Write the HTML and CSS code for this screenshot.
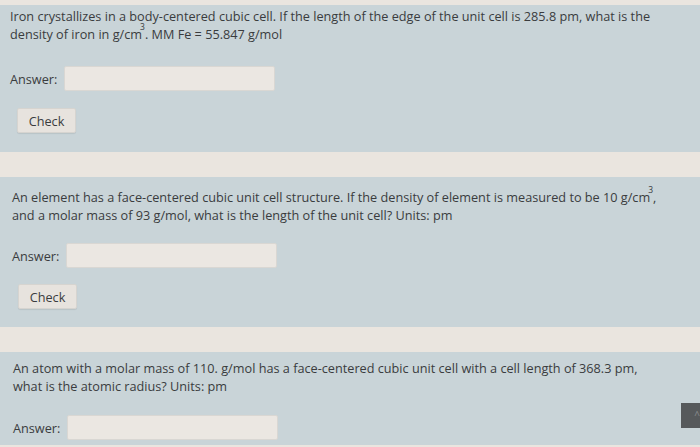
FILE: index.html
```html
<!DOCTYPE html>
<html lang="en">
<head>
<meta charset="utf-8">
<title>Quiz</title>
<link rel="stylesheet" href="styles.css">
</head>
<body>
<div class="page">
  <section class="question q1">
    <p class="qtext">Iron crystallizes in a body-centered cubic cell. If the length of the edge of the unit cell is 285.8 pm, what is the density of iron in g/cm<sup>3</sup>. MM Fe = 55.847 g/mol</p>
    <div class="answer-row">
      <label class="answer-label">Answer:</label>
      <span class="answer-input"></span>
    </div>
    <button class="check">Check</button>
  </section>
  <section class="question q2">
    <p class="qtext">An element has a face-centered cubic unit cell structure. If the density of element is measured to be 10 g/cm<sup>3</sup>, and a molar mass of 93 g/mol, what is the length of the unit cell? Units: pm</p>
    <div class="answer-row">
      <label class="answer-label">Answer:</label>
      <span class="answer-input"></span>
    </div>
    <button class="check">Check</button>
  </section>
  <section class="question q3">
    <p class="qtext">An atom with a molar mass of 110. g/mol has a face-centered cubic unit cell with a cell length of 368.3 pm, what is the atomic radius? Units: pm</p>
    <div class="answer-row">
      <label class="answer-label">Answer:</label>
      <span class="answer-input"></span>
    </div>
  </section>
</div>
<div class="to-top">^</div>
</body>
</html>
```

FILE: styles.css
```css
html, body {
  margin: 0;
  padding: 0;
  background: #eae5df;
  height: 447px;
  overflow: hidden;
}
body {
  font-family: "Open Sans", "DejaVu Sans", sans-serif;
  font-size: 12.7px;
  color: #3a3c3e;
}
.page {
  display: flex;
  flex-direction: column;
  gap: 25px;
  padding-top: 5px;
}
.question {
  background: #c9d4d8;
  padding: 11px 12px 18px 12px;
}
.q1 { padding: 2px 10px 19px 10px; }
.q3 { padding: 7px 13px 5px 13px; }
.qtext {
  margin: 0;
  line-height: 18px;
  max-width: 668px;
}
.q2 .qtext { max-width: 664px; }
.q3 .qtext { max-width: 640px; }
.qtext sup {
  font-size: 8.5px;
  line-height: 0;
  margin-left: -2px;
  vertical-align: 9px;
}
.answer-row {
  display: flex;
  align-items: center;
  gap: 7px;
  margin-top: 19px;
}
.q1 .answer-row { margin-top: 23px; }
.q3 .answer-row { margin-top: 20px; }
.answer-input {
  display: block;
  width: 211px;
  height: 25px;
  box-sizing: border-box;
  background: #ebe7e2;
  border: 1px solid #d9d7d3;
  border-radius: 2px;
}
.check {
  display: block;
  margin: 16px 0 0 6px;
  width: 59px;
  height: 25px;
  font-family: inherit;
  font-size: 12.7px;
  color: #3a3c3e;
  background: #e7e3de;
  border: 1px solid #d6d4d0;
  border-radius: 2px;
  box-shadow: 0 1px 1px rgba(0,0,0,0.08);
  padding: 0;
}
.q1 .check { margin-top: 17px; margin-left: 7px; }
.to-top {
  position: absolute;
  left: 681px;
  top: 403px;
  width: 19px;
  height: 25px;
  background: #56595b;
  color: #8a8d8f;
  font-size: 10px;
  text-align: right;
  line-height: 25px;
}
```
